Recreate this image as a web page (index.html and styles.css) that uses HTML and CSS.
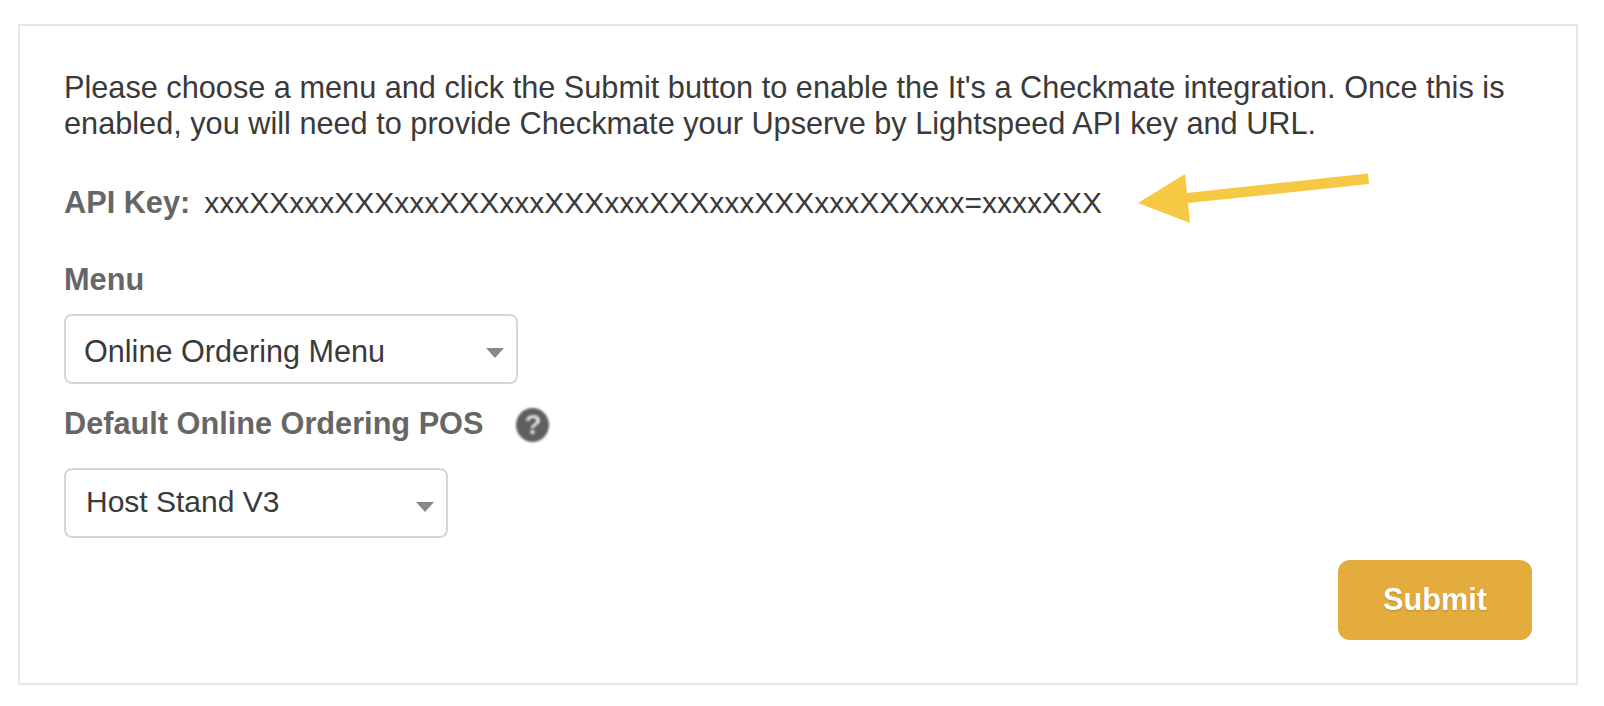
FILE: index.html
```html
<!DOCTYPE html>
<html lang="en">
  <head>
    <meta charset="UTF-8" />
    <meta name="viewport" content="width=device-width, initial-scale=1.0" />
    <title>Checkmate Integration</title>
    <link rel="stylesheet" href="styles.css">
  </head>
  <body>
    <div class="panel">
      <p class="intro">
        Please choose a menu and click the Submit button to enable the It's a Checkmate integration. Once this is
        enabled, you will need to provide Checkmate your Upserve by Lightspeed API key and URL.
      </p>

      <div class="api-row">
        <strong class="api-label">API Key:</strong>
        <span class="api-value">xxxXXxxxXXXxxxXXXxxxXXXxxxXXXxxxXXXxxxXXXxxx=xxxxXXX</span>
      </div>

      <div class="field-label menu-label">Menu</div>
      <div class="select menu-select">
        <span class="select-text">Online Ordering Menu</span>
        <i class="caret"></i>
      </div>

      <div class="field-label pos-label">
        Default Online Ordering POS
        <span class="help-icon">?</span>
      </div>
      <div class="select pos-select">
        <span class="select-text">Host Stand V3</span>
        <i class="caret"></i>
      </div>

      <div class="actions">
        <button class="submit-button">Submit</button>
      </div>

      <!-- Annotation arrow pointing at the key -->
      <svg class="arrow" width="240" height="60" viewBox="0 0 240 60">
        <path d="M0 34 L47 5 L49 24 L230 4.5 L231 15 L50 34 L52 54 Z" fill="#f6c944" />
      </svg>
    </div>
  </body>
</html>
```

FILE: styles.css
```css
body {
  margin: 0;
  font-family: "Liberation Sans", Arial, sans-serif;
  background-color: #fff;
  color: #3a3a3a;
}

.panel {
  position: relative;
  box-sizing: border-box;
  width: 1560px;
  height: 661px;
  margin: 24px 0 0 18px;
  padding: 44px 44px 0 44px;
  border: 2px solid #e6e6e6;
}

.intro {
  margin: 0;
  font-size: 30.7px;
  line-height: 36px;
}

.api-row {
  display: flex;
  align-items: baseline;
  margin-top: 43px;
  line-height: 36px;
}

.api-label {
  font-size: 30.7px;
  color: #666;
  margin-right: 14px;
}

.api-value {
  font-size: 30px;
}

.field-label {
  font-size: 30.7px;
  font-weight: bold;
  line-height: 36px;
  color: #666;
}

.menu-label {
  margin-top: 41px;
}

.pos-label {
  display: flex;
  align-items: center;
  margin-top: 22px;
}

.help-icon {
  width: 33px;
  height: 34px;
  margin: 1px 0 0 33px;
  border-radius: 50%;
  background-color: #5f5f5f;
  color: #ddd;
  font-size: 28px;
  line-height: 34px;
  text-align: center;
  filter: blur(1px);
}

.select {
  position: relative;
  box-sizing: border-box;
  height: 70px;
  border: 2px solid #d6d6d6;
  border-radius: 8px;
  display: flex;
  align-items: center;
  justify-content: space-between;
}

.menu-select {
  width: 454px;
  margin-top: 16px;
  padding: 0 12px 0 18px;
  font-size: 30.6px;
}

.menu-select .select-text {
  margin-top: 5px;
}

.pos-select {
  width: 384px;
  margin-top: 26px;
  padding: 0 12px 0 20px;
  font-size: 30px;
}

.pos-select .select-text {
  margin-top: -2px;
}

.caret {
  width: 0;
  height: 0;
  margin-top: 7px;
  border-left: 9px solid transparent;
  border-right: 9px solid transparent;
  border-top: 10px solid #888;
}

.actions {
  display: flex;
  justify-content: flex-end;
  margin-top: 22px;
}

.submit-button {
  width: 194px;
  height: 80px;
  border: none;
  border-radius: 12px;
  background-color: #e3ac3c;
  color: #fff;
  font-family: inherit;
  font-size: 30.7px;
  font-weight: bold;
  text-shadow: 0 1px 2px rgba(0, 0, 0, 0.2);
}

.arrow {
  position: absolute;
  left: 1118px;
  top: 143px;
}
```
